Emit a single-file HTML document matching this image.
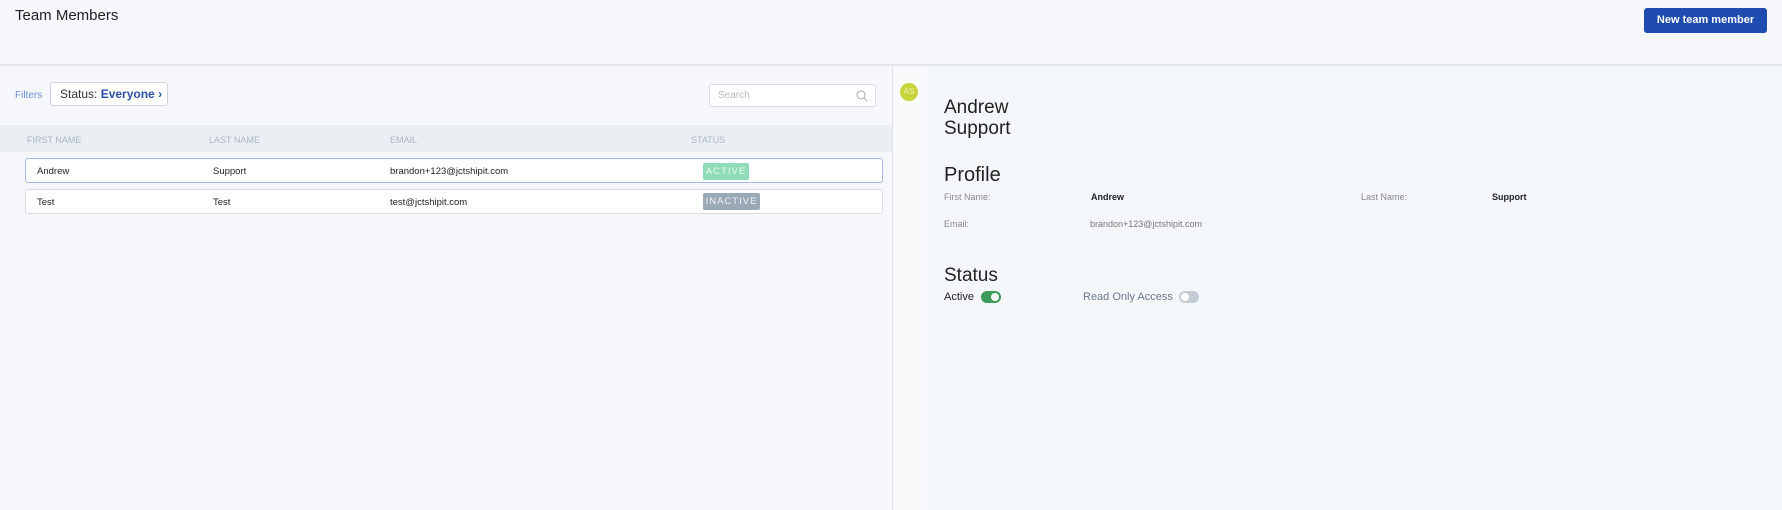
<!DOCTYPE html>
<html><head><meta charset="utf-8"><style>
*{box-sizing:border-box;margin:0;padding:0}
body{width:1782px;height:510px;overflow:hidden;background:#f5f7fa;font-family:"Liberation Sans",sans-serif;color:#222;position:relative}
.a{position:absolute;white-space:nowrap}
</style></head><body>
<div class="a" style="left:0;top:0;width:1782px;height:66px;background:#f6f7fa;border-bottom:2px solid #e3e7ec"></div>
<div class="a" style="left:15px;top:7px;font-size:15px;color:#222">Team Members</div>
<div class="a" style="left:1644px;top:8px;width:123px;height:25px;background:#1e4bb0;border-radius:3px;color:#fff;font-size:11px;font-weight:bold;text-align:center;line-height:25px">New team member</div>

<div class="a" style="left:15px;top:90px;font-size:10px;color:#6b8fe0">Filters</div>
<div class="a" style="left:50px;top:82px;width:118px;height:24px;background:#fff;border:1px solid #cfd5dc;border-radius:3px;font-size:12px;line-height:22px;padding-left:9px;color:#333">Status: <b style="color:#2b4fa8">Everyone</b> <b style="color:#2b4fa8">›</b></div>
<div class="a" style="left:709px;top:84px;width:167px;height:23px;background:#fff;border:1px solid #d8dde3;border-radius:3px;font-size:10px;color:#bbb;line-height:21px;padding-left:8px">Search
<svg style="position:absolute;right:7px;top:5px" width="12" height="12" viewBox="0 0 12 12"><circle cx="5" cy="5" r="4" fill="none" stroke="#aaa" stroke-width="1"/><path d="M8 8l3 3" stroke="#aaa"/></svg></div>

<div class="a" style="left:0;top:125px;width:892px;height:27px;background:#ebeff3"></div>
<div class="a" style="left:27px;top:135px;font-size:9px;color:#a9b4bf">FIRST NAME</div>
<div class="a" style="left:209px;top:135px;font-size:9px;color:#a9b4bf">LAST NAME</div>
<div class="a" style="left:390px;top:135px;font-size:9px;color:#a9b4bf">EMAIL</div>
<div class="a" style="left:691px;top:135px;font-size:9px;color:#a9b4bf">STATUS</div>

<div class="a" style="left:25px;top:158px;width:858px;height:25px;background:#fff;border:1px solid #aab9ec;border-radius:3px"></div>
<div class="a" style="left:37px;top:166px;font-size:9.5px">Andrew</div>
<div class="a" style="left:213px;top:166px;font-size:9.5px">Support</div>
<div class="a" style="left:390px;top:166px;font-size:9.5px">brandon+123@jctshipit.com</div>
<div class="a" style="left:703px;top:163px;width:46px;height:17px;background:#8fdcb9;color:#e9fbf2;font-size:9.5px;line-height:17px;text-align:center;letter-spacing:1px;border-radius:2px">ACTIVE</div>

<div class="a" style="left:25px;top:189px;width:858px;height:25px;background:#fff;border:1px solid #d8dde3;border-radius:3px"></div>
<div class="a" style="left:37px;top:197px;font-size:9.5px">Test</div>
<div class="a" style="left:213px;top:197px;font-size:9.5px">Test</div>
<div class="a" style="left:390px;top:197px;font-size:9.5px">test@jctshipit.com</div>
<div class="a" style="left:703px;top:193px;width:57px;height:17px;background:#9aa9b6;color:#eef2f5;font-size:9.5px;line-height:17px;text-align:center;letter-spacing:1px;border-radius:2px">INACTIVE</div>

<div class="a" style="left:892px;top:67px;width:1px;height:443px;background:#dde3e9"></div>
<div class="a" style="left:893px;top:67px;width:34px;height:443px;background:#f8fafc"></div>
<div class="a" style="left:927px;top:67px;width:855px;height:443px;background:#f4f7f9"></div>
<div class="a" style="left:900px;top:83px;width:18px;height:18px;border-radius:50%;background:#c6d33a;color:#eef3b8;font-size:8px;text-align:center;line-height:18px">AS</div>
<div class="a" style="left:944px;top:97px;font-size:19px;line-height:21px;color:#222">Andrew<br>Support</div>
<div class="a" style="left:944px;top:164px;font-size:20px;color:#222">Profile</div>
<div class="a" style="left:944px;top:192px;font-size:9px;color:#888">First Name:</div>
<div class="a" style="left:1091px;top:192px;font-size:9px;font-weight:bold;color:#222">Andrew</div>
<div class="a" style="left:1361px;top:192px;font-size:9px;color:#888">Last Name:</div>
<div class="a" style="left:1492px;top:192px;font-size:9px;font-weight:bold;color:#222">Support</div>
<div class="a" style="left:944px;top:219px;font-size:9px;color:#888">Email:</div>
<div class="a" style="left:1090px;top:219px;font-size:9px;color:#777">brandon+123@jctshipit.com</div>
<div class="a" style="left:944px;top:265px;font-size:19px;color:#222">Status</div>
<div class="a" style="left:944px;top:291px;font-size:11px;color:#222">Active</div>
<div class="a" style="left:981px;top:291px;width:20px;height:12px;border-radius:6px;background:#3a9a5a"><div style="position:absolute;right:2px;top:2px;width:8px;height:8px;border-radius:50%;background:#fff"></div></div>
<div class="a" style="left:1083px;top:291px;font-size:11px;color:#6a7a8c">Read Only Access</div>
<div class="a" style="left:1179px;top:291px;width:20px;height:12px;border-radius:6px;background:#c3cbd5"><div style="position:absolute;left:2px;top:2px;width:8px;height:8px;border-radius:50%;background:#fff"></div></div>
</body></html>
